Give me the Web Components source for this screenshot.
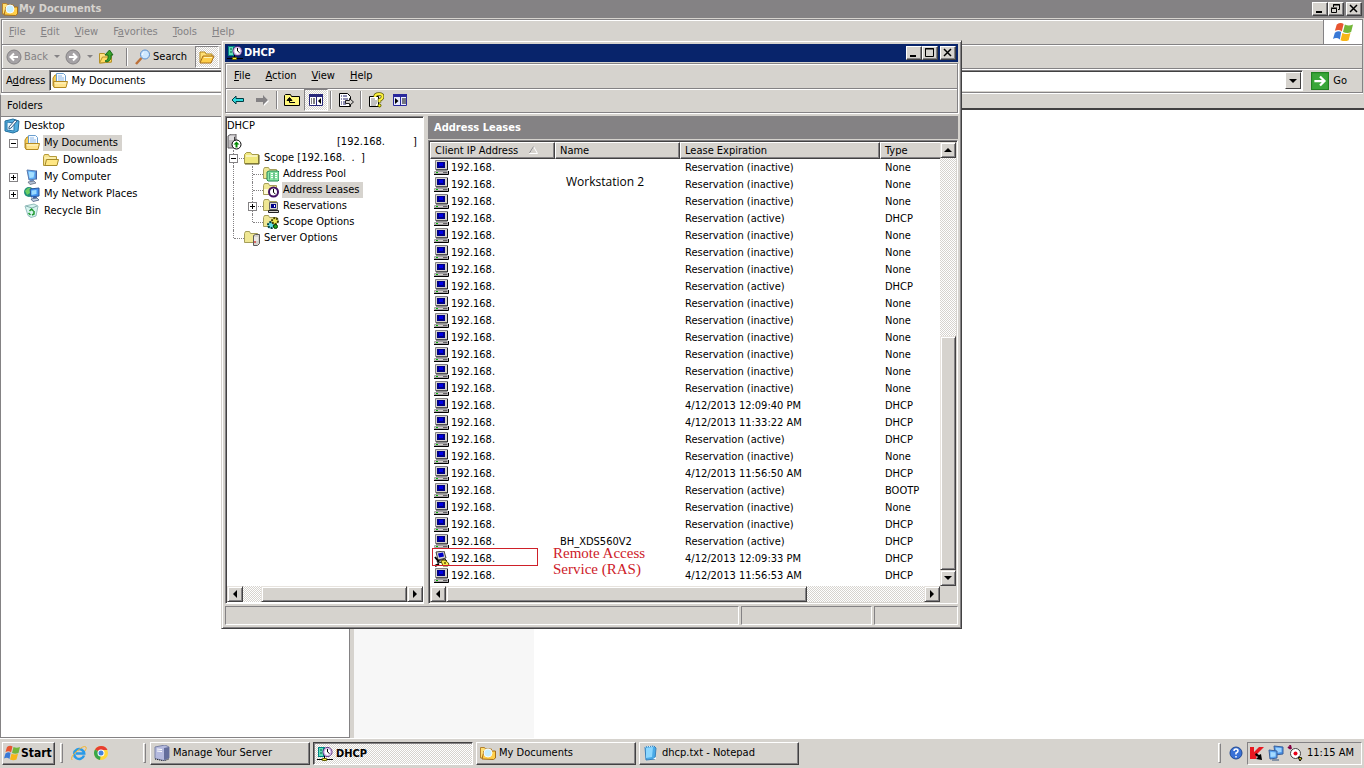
<!DOCTYPE html>
<html lang="en">
<head>
<meta charset="utf-8">
<title>DHCP</title>
<style>
html, body {
	height: 100%;
	margin: 0;
}

body {
	overflow: hidden;
	font: 11px/16px "DejaVu Sans Condensed", "DejaVu Sans", sans-serif;
	color: #000000;
	--face: #d6d3ce;
	--shade: #848284;
	--dark: #424142;
	--navy: #08246b;
	--dither: repeating-conic-gradient(#ffffff 0 25%, #d6d3ce 0 50%) 0 0 / 2px 2px;
}
</style>
</head>
<body>
<desktop-page></desktop-page>

<script>
const base = `
* { box-sizing: border-box; }
button, input, select { font: inherit; color: inherit; margin: 0; }
button { border: 0; padding: 0; background: none; white-space: nowrap; }
`;

// every element below clones its own template into an open shadow root
function define(name, html, setup) {
	const template = document.createElement("template");
	template.innerHTML = html.replace("<style>", "<style>" + base);
	customElements.define(name, class extends HTMLElement {
		static observedAttributes = ["name"];

		constructor() {
			super();
			this.attachShadow({ mode: "open" });
			this.shadowRoot.appendChild(template.content.cloneNode(true));
		}

		connectedCallback() {
			if (setup) setup(this, this.shadowRoot);
		}

		attributeChangedCallback() {
			if (this.isConnected && setup) setup(this, this.shadowRoot);
		}
	});
}

const folder = `<path d="M.5 4.500l1-2h4l1 2h7v9H.5z" fill="#f7e38c" stroke="#b59a39"/><path d="M1.500 6h11" stroke="#fff7c6"/><path d="M2 13.500l1.500-6h12l-1.500 6z" fill="#ffe784" stroke="#a58a29"/>`;
const smallFolder = `<path d="M.5 3.500l1-2h4l1 2h7v9H.5z" fill="#efe794" stroke="#a59e5a"/>`;
const docs = `<path d="M1 5l2-3h3v12H2l-1-1z" fill="#f7cf5a" stroke="#b58a21"/><path d="M4.500.5h7l2 2v9h-9z" fill="#f7fbff" stroke="#6b9ece"/><path d="M6 3h4M6 5h6M6 7h6" stroke="#8cb6e7"/><path d="M1.500 8.500h14l-1.500 6H2z" fill="#ffe38c" stroke="#b58a21"/><path d="M3 10h11" stroke="#fff7ce"/>`;
const searchFolder = `<path d="M.5 2.500h4l1 1.500h6v9H.5z" fill="#ffdf73" stroke="#b5822e"/><path d="M2 14l2-8h11.500v7l-2 1.500z" fill="#ffcf4a" stroke="#a56d18"/><circle cx="8" cy="8" r="4" fill="#c6efff" stroke="#f7fbff"/>`;
const clockServer = `<path d="M1 1h7v10H1z" fill="#008284"/><path d="M2 2h4v8H2z" fill="#63dfb5"/><path d="M3 4h2M3 7h2" stroke="#006142"/><circle cx="10.500" cy="6" r="4.500" fill="#fff" stroke="#4a1873"/><circle cx="10.500" cy="6" r="3.500" fill="none" stroke="#ceb2e7"/><path d="M10.500 3v3l2 1.500" fill="none" stroke="#000"/><path d="M0 13.500h16M7.500 10v3" stroke="#000"/><path d="M5.500 12.500h4v2h-4z" fill="#ffef42" stroke="#636100"/>`;
const flag = `<path d="M3 2q3-2 5.500-.5L7 7.500Q5 5.500 1.500 7z" fill="#e75531"/><path d="M9.500 2q3 1.500 6.500 0L14.500 8q-3 1.500-6.500 0z" fill="#73b639"/><path d="M1.500 8.500q3-2 5-.5L5.500 14Q3 12 0 13.500z" fill="#3979d6"/><path d="M7.500 8.800q3 1.500 6.500 0L12.500 14.500q-3 1.500-6.500 0z" fill="#f7b618"/>`;

const icons = {
	folder: folder,
	yellow: `<path d="M.5 4.500l2-2h4l1.500 2h6.500v9H.5z" fill="#efe77b" stroke="#a59a4a"/><path d="M2 6h11" stroke="#fff"/><path d="M15 5v9H1" fill="none" stroke="#5a5921"/>`,
	open: `<path d="M1 13V3h5l1 2h6v3" fill="#ffdf73" stroke="#b58a21"/><path d="M1 14l3-7h11l-3 7z" fill="#ffcf4a" stroke="#a56d18"/><path d="M5 8.500h8" stroke="#fff3b5"/>`,
	docs: docs,
	searchfolder: searchFolder,
	desktop: `<path d="M1 3l8-2 6 2-1 10-5 2-8-2z" fill="#52aede" stroke="#216d9c"/><path d="M3 4l7 1v8l-7-1z" fill="#e7f7ff" stroke="#2979ad"/><path d="M5 9l6-7 2 1-6 7-2 1z" fill="#fff" stroke="#315d84"/>`,
	computer: `<path d="M3 1l9 1v8l-7 1z" fill="#5aaaf7" stroke="#5a7aad"/><path d="M4.500 2.500l6 1-1 5-4 .5z" fill="#a5dfff"/><path d="M6 11h4v2H6z" fill="#638ac6"/><path d="M4 13l6-1 2 2-6 1.500z" fill="#b5c3d6" stroke="#7b8294"/><path d="M12 1l1 1v8l-1 1z" fill="#4261a5"/>`,
	network: `<circle cx="5" cy="6" r="5" fill="#218e7b"/><path d="M1 5q3-4 6-3l-1 5-3 2z" fill="#6bcf63"/><path d="M6 3l9-1v8l-8 1z" fill="#4292ef" stroke="#29559c"/><path d="M7.500 4.500l5-.5v4l-5 1z" fill="#9cdbff"/><path d="M9 11h4v2H9z" fill="#3961ad"/><path d="M7 13l6-1 2 2-6 1.500z" fill="#c6d7e7" stroke="#637594"/>`,
	recycle: `<path d="M1 3l9-2 4 2-2 10-5 1.500-3-2z" fill="#d6f3ef" stroke="#94bebd"/><path d="M2 3l6 2 5-2" fill="none" stroke="#84aead"/><path d="M5.500 8l2-2 2 2M10 8v3l-2 1M6.500 12l-2-2" fill="none" stroke="#219a31" stroke-width="1.500"/>`,
	back: `<circle cx="8" cy="8" r="7" fill="#a5a2a5" stroke="#848284"/><path d="M12 8H5M8 4.500L4.500 8 8 11.500" fill="none" stroke="#fff" stroke-width="2"/>`,
	forward: `<circle cx="8" cy="8" r="7" fill="#a5a2a5" stroke="#848284"/><path d="M4 8h7M8 4.500l3.500 3.500L8 11.500" fill="none" stroke="#fff" stroke-width="2"/>`,
	up: `<path d="M1.500 14V4.500h5l1 1.500h6v7z" fill="#ffe384" stroke="#b59229"/><path d="M1.500 14l3-6h9v5z" fill="#ffdb63" stroke="#b59229"/><path d="M7 12q4-1 3-6H7l4.500-5L15 6h-2q1 5-4 7z" fill="#39a629" stroke="#18691d"/>`,
	search: `<circle cx="10" cy="5.500" r="4.500" fill="#cee7ff" stroke="#5a8ece"/><path d="M8.500 3.500q-1 1-1 2.500" stroke="#fff" fill="none"/><path d="M6.500 9l-5.500 6" stroke="#bd7139" stroke-width="2.500"/>`,
	go: `<path d="M0 0h16v16H0z" fill="#39a639"/><path d="M.5.5h15v15H.5z" fill="none" stroke="#218221"/><path d="M3 8h9M8 4l4 4-4 4" fill="none" stroke="#fff" stroke-width="2"/>`,
	flag: flag,
	dhcp: clockServer,
	left: `<path d="M2 8l4-4v2.500h7.500v3H6V12z" fill="#31dbde" stroke="#003c42"/>`,
	right: `<path d="M15 9l-5-5v3H3v3h7v4z" fill="#fff"/><path d="M14 8L9 3v3H2v4h7v3z" fill="#848284"/>`,
	levelup: `<path d="M.5 13.500v-10l1-1h5l1 2h8v9z" fill="#fff77b" stroke="#000"/><path d="M5.500 7.500v3H11M3 8.500l2.500-3 2.500 3z" stroke="#000" fill="none"/><path d="M3 8.500l2.500-3 2.500 3z"/>`,
	panel: `<path d="M1.500 2.500h13v11h-13z" fill="#fff" stroke="#29287b"/><path d="M1 2h14v3H1z" fill="#29287b"/><path d="M8.500 4v10" stroke="#29287b"/><path d="M3 7h1M5 7h2M3 9h1M5 9h2M3 11h1M5 11h2" stroke="#000"/><path d="M13 6v6l-3-3z"/>`,
	panelright: `<path d="M1.500 2.500h13v11h-13z" fill="#e7ebff" stroke="#29289c"/><path d="M1 2h14v3H1z" fill="#29289c"/><path d="M8.500 4v10" stroke="#29289c"/><path d="M10 7h4M10 9h4M10 11h4" stroke="#000"/><path d="M3 6v6l3.500-3z"/>`,
	export: `<path d="M1.500 1.500h8l3 3v10h-11z" fill="#fff" stroke="#000"/><path d="M3 4h1M5 4h4M3 7h1M5 7h5M3 10h1M5 10h3M3 12h1M5 12h3" stroke="#21206b"/><path d="M7.500 8.500h4v-2l4 3.500-4 3.500v-2h-4z" fill="#d6d3ce" stroke="#212021"/>`,
	help: `<path d="M1.500 4.500h9v10h-9z" fill="#fff" stroke="#000"/><path d="M3 7h4M3 9h6M3 11h6M3 13h5" stroke="#848284"/><path d="M7 5q0-3 4-3t3.500 3q0 2-3 3v2.500" fill="none" stroke="#5a5900" stroke-width="3.500"/><path d="M7 5q0-3 4-3t3.500 3q0 2-3 3v2" fill="none" stroke="#fff342" stroke-width="2"/><circle cx="11.500" cy="13.500" r="1.500" fill="#ffff00" stroke="#5a5900"/>`,
	server: `<path d="M1 2l3-2h5v12l-2 2H1z" fill="#bdbabd" stroke="#636163"/><path d="M2 3h5M2 5h5" stroke="#fff"/><path d="M7.500 3v9" stroke="#424142"/><circle cx="9.500" cy="10.500" r="4.500" fill="#fff" stroke="#000"/><path d="M6.500 10.500l3-3 3 3h-2v3h-2v-3z" fill="#008a00"/>`,
	pool: smallFolder + `<path d="M4 6l2-1h9l1 1v8l-1 1H5l-1-1z" fill="#8ce7a5" stroke="#218252"/><path d="M8 7.500h2M8 9.500h2M8 11.500h2M12 7.500h2M12 9.500h2M12 11.500h2" stroke="#fff"/><path d="M6.500 6.500v7M11 6.500v7" stroke="#52a67b"/>`,
	leases: smallFolder + `<path d="M1 7h10l-2 5H1z" fill="#fffbd6"/><circle cx="10.500" cy="10" r="4.500" fill="#fff" stroke="#421063" stroke-width="2"/><path d="M10.500 7v3.500l2 1.500" fill="none" stroke="#000"/>`,
	reservations: smallFolder + `<path d="M6.500 4.500h8v7h-8z" fill="#d6d3ce" stroke="#636163"/><path d="M8 6h5v4H8z" fill="#00008c"/><path d="M11 7h1v2h-1z" fill="#fff"/><path d="M5.500 12.500h10v2h-10z" fill="#d6d3ce" stroke="#212021"/>`,
	options: smallFolder + `<circle cx="8" cy="11" r="3" fill="#63dfe7" stroke="#004142" stroke-width="2" stroke-dasharray="2 1"/><circle cx="12" cy="7" r="3" fill="#efe752" stroke="#424100" stroke-width="2" stroke-dasharray="2 1"/><circle cx="12.500" cy="12.500" r="2" fill="#21a221" stroke="#003c00"/>`,
	serveroptions: smallFolder + `<path d="M9.500 5.500l2-1h4v9l-2 2h-4z" fill="#d6d3ce" stroke="#5a595a"/><path d="M10 8h4M10 10h4" stroke="#fff"/><path d="M10 12h2" stroke="#d60000"/>`,
	client: `<path d="M1.500.5h12v9h-12z" fill="#d6d3ce" stroke="#848284"/><path d="M3 2h8v6H3z" fill="#000084"/><path d="M5 3h4v3H5z" fill="#0000e7"/><path d="M13.500 1v9H2" fill="none" stroke="#212021"/><path d="M.5 11.500h13v2H.5z" fill="#d6d3ce" stroke="#a5a2a5"/><path d="M0 14.500h14.500V11" fill="none" stroke="#000"/><path d="M2 12.500h2" stroke="#00b200"/><path d="M9 12.500h4" stroke="#636163"/>`,
	ras: `<path d="M2 1l8-1 2 7-8 2z" fill="#d6d3ce" stroke="#424142"/><path d="M4 2.500l5-1 1 4-5 1z" fill="#0000c6"/><path d="M3 10l8-2 2 2-9 2z" fill="#d6d3ce" stroke="#212021"/><path d="M1 6l4 5M1 15l4-2" stroke="#000" stroke-width="2"/><path d="M7 10q4-3 8 3l-1 2H9z" fill="#f7e74a" stroke="#5a5500"/><circle cx="11" cy="12" r="1" fill="#5a5500"/>`,
	ie: `<path d="M13 10.500A5 5 0 1 1 13.200 8.500H5" fill="none" stroke="#299ae7" stroke-width="2.500"/><path d="M1 15Q-1 12 6 6t9-4q1 1-1 4" fill="none" stroke="#f7b631"/>`,
	chrome: `<circle cx="8" cy="8" r="7" fill="#ffd73a"/><path d="M8 8L2 4.500A7 7 0 0 1 14.500 5H8z" fill="#e73d31"/><path d="M8 8L2 4.500A7 7 0 0 0 7 15z" fill="#39a64a"/><circle cx="8" cy="8" r="3.500" fill="#fff"/><circle cx="8" cy="8" r="2.500" fill="#4282de"/>`,
	tower: `<path d="M1 2l10-2 4 2v11l-5 2.500-9-2z" fill="#b5bade" stroke="#7b82a5"/><path d="M10 3l5-1v11l-5 2z" fill="#636d9c"/><path d="M3 4l5 .5M3 6l5 .5" stroke="#fff"/><path d="M1 14l9 2 5-2" fill="none" stroke="#212429" stroke-dasharray="1 1"/>`,
	notepad: `<path d="M2 2l9-1 2 2-1 11-9 1z" fill="#4aaae7" stroke="#3982bd"/><path d="M3 3l7-1-1 10-6 1z" fill="#8cd7ff"/><path d="M2 2l9-1" stroke="#e7f7ff" stroke-dasharray="1 1"/><path d="M10 14l3-2v2z" fill="#fff"/>`,
	ask: `<circle cx="8" cy="8" r="6" fill="#3971d6" stroke="#214992"/><path d="M6 6q0-2 2-2t2 2q0 1-2 2v1.500M8 11v1.500" fill="none" stroke="#fff" stroke-width="1.500"/>`,
	kaspersky: `<path d="M1 2h4v5l5-5h5L8.500 8.500 7 14H1z" fill="#e71821"/><path d="M7 8l3 2 2-1 1 6-6-1 2-2-3-2z" fill="#000"/>`,
	lan: `<path d="M6 1l9 1v7l-8 1z" fill="#4a92e7" stroke="#39619c"/><path d="M7.500 2.500l6 .5v4l-5 1z" fill="#9cd3ff"/><path d="M1 5l8 1v7l-7 1z" fill="#5aa2ef" stroke="#39619c"/><path d="M2.500 7l5 .5v4l-5 .5z" fill="#a5dbff"/><path d="M4 15h7" stroke="#8492a5" stroke-width="2"/>`,
	target: `<circle cx="8.500" cy="8.500" r="5" fill="#fff" stroke="#424142"/><circle cx="8.500" cy="8.500" r="2" fill="#e70018"/><path d="M1 2l3 2M3 0l1 4" stroke="#840042" stroke-width="2"/><path d="M11 12l4 1-2 3z" fill="#efdb00" stroke="#000"/>`
};

define("win-icon", `
<style>
:host { display: inline-block; flex: none; width: 16px; height: 16px; }
svg { display: block; width: 100%; height: 100%; }
</style>
<svg viewBox="0 0 16 16" aria-hidden="true"></svg>
`, (host, root) => {
	root.querySelector("svg").innerHTML = icons[host.getAttribute("name")] || "";
});

define("title-bar", `
<style>
:host { display: flex; align-items: center; height: 18px; padding: 0 2px; color: #d6d3ce; background: var(--shade); font-weight: bold; }
:host([active]) { color: #ffffff; background: var(--navy); }
.text { flex: 1; padding-left: 1px; }
button { width: 16px; height: 14px; background: var(--face); border: 1px solid; border-color: #fff var(--dark) var(--dark) #fff; box-shadow: inset -1px -1px var(--shade); }
.close { margin-left: 2px; }
svg { display: block; width: 14px; height: 12px; fill: none; stroke: #000; }
</style>
<slot name="icon"></slot>
<span class="text"><slot></slot></span>
<button aria-label="Minimize"><svg viewBox="0 0 14 12"><path d="M3 9h6" stroke-width="2"/></svg></button>
<button aria-label="Maximize"><svg viewBox="0 0 14 12" class="size"></svg></button>
<button class="close" aria-label="Close"><svg viewBox="0 0 14 12"><path d="M3 2l7 7M10 2L3 9" stroke-width="1.500"/></svg></button>
`, (host, root) => {
	root.querySelector(".size").innerHTML = host.hasAttribute("maximized")
		? `<path d="M4.500 4V1.500h6v5H9M4 2h7M2.500 5.500h5v4h-5zM2 5h6"/>`
		: `<path d="M2.500 1.500h8v8h-8zM2 2h9"/>`;
});

define("menu-bar", `
<style>
:host { display: flex; align-items: center; }
</style>
<slot></slot>
`);

define("menu-item", `
<style>
:host { display: block; }
button { padding: 0 8px 0 7px; }
</style>
<button><slot></slot></button>
`);

define("tool-button", `
<style>
:host { display: flex; flex: none; }
button { display: flex; align-items: center; height: 22px; padding: 0 3px; gap: 2px; border: 1px solid transparent; }
:host([pressed]) button { border-color: var(--shade) #fff #fff var(--shade); background: var(--dither); }
:host([disabled]) button { color: var(--shade); }
.arrow { display: none; margin-left: 4px; border: 3px solid transparent; border-top-color: var(--shade); border-bottom: 0; }
:host([menu]) .arrow { display: block; }
:host([menu]) button { padding-right: 0; }
</style>
<button><win-icon></win-icon><slot></slot><span class="arrow"></span></button>
`, (host, root) => {
	root.querySelector("win-icon").setAttribute("name", host.getAttribute("icon"));
	if (host.hasAttribute("label")) root.querySelector("button").setAttribute("aria-label", host.getAttribute("label"));
});

define("tool-line", `
<style>
:host { display: block; flex: none; width: 2px; height: 18px; border-left: 1px solid var(--shade); border-right: 1px solid #fff; }
</style>
`);

define("tree-item", `
<style>
:host { display: flex; align-items: center; height: var(--row, 16px); white-space: nowrap; }
.cell { position: relative; flex: none; align-self: stretch; width: 19px; }
.cell:first-of-type { width: var(--first, 17px); }
.line::before { content: ""; position: absolute; top: 0; bottom: 0; right: 10px; border-left: 1px dotted var(--shade); }
.last::before { bottom: 50%; }
.branch::after { content: ""; position: absolute; top: 50%; right: 0; width: 10px; border-top: 1px dotted var(--shade); }
button { position: absolute; z-index: 1; right: 6px; top: calc(50% - 4px); width: 9px; height: 9px; border: 1px solid var(--shade); background: #fff; }
button::before { content: ""; position: absolute; left: 1px; right: 1px; top: 3px; height: 1px; background: #000; }
button.plus::after { content: ""; position: absolute; top: 1px; bottom: 1px; left: 3px; width: 1px; background: #000; }
.text { margin-left: 3px; padding: 0 4px 0 1px; white-space: pre; }
:host([noicon]) .text { margin-left: 0; padding-left: 0; }
:host([selected]) .text { background: var(--face); }
</style>
<win-icon></win-icon><span class="text"><slot></slot></span>
`, (host, root) => {
	const icon = root.querySelector("win-icon");
	if (host.hasAttribute("noicon")) icon.remove();
	else icon.setAttribute("name", host.getAttribute("icon"));
	// one letter per indent cell: s space, l line, b branch, e last branch
	for (const kind of host.getAttribute("guides") || "") {
		const cell = document.createElement("span");
		cell.className = "cell" + { s: "", l: " line", b: " line branch", e: " line last branch" }[kind];
		icon.before(cell);
	}
	const expand = host.getAttribute("expand");
	if (expand) {
		const button = document.createElement("button");
		button.className = expand;
		button.setAttribute("aria-label", expand == "plus" ? "Expand" : "Collapse");
		icon.previousElementSibling.append(button);
	}
});

define("scroll-bar", `
<style>
:host { display: flex; flex: none; height: 16px; background: var(--dither); }
:host([vertical]) { flex-direction: column; width: 16px; height: auto; }
button, .thumb { border: 1px solid; border-color: #e7e3de var(--dark) var(--dark) #e7e3de; box-shadow: inset 1px 1px #fff, inset -1px -1px var(--shade); background: var(--face); }
button { display: grid; place-items: center; flex: none; width: 16px; height: 16px; }
.before { flex: var(--before, 0) 0 0px; }
.thumb { flex: var(--thumb, 1) 0 0px; }
.after { flex: var(--after, 0) 0 0px; }
svg { width: 8px; height: 8px; }
:host([vertical]) svg { rotate: 90deg; }
</style>
<button aria-label="Scroll back"><svg viewBox="0 0 8 8"><path d="M6 0v8L2 4z"/></svg></button>
<div class="before"></div><div class="thumb"></div><div class="after"></div>
<button aria-label="Scroll forward"><svg viewBox="0 0 8 8"><path d="M2 0v8l4-4z"/></svg></button>
`);

define("lease-table", `
<style>
:host { display: block; position: relative; flex: 1; min-width: 0; background: #fff; }
table { width: 100%; border-collapse: separate; border-spacing: 0; table-layout: fixed; }
th { height: 17px; padding: 0 0 0 4px; text-align: left; font-weight: normal; line-height: 14px; background: var(--face); border: 1px solid; border-color: #fff var(--dark) var(--dark) #fff; box-shadow: inset -1px -1px var(--shade); }
th:last-child { border-right: 0; box-shadow: inset 0 -1px var(--shade); }
th:nth-child(1), th:nth-child(2) { width: 125px; }
th:nth-child(3) { width: 200px; }
th svg { width: 9px; height: 8px; margin-left: 11px; }
td { height: 17px; padding: 0 0 0 5px; line-height: 17px; white-space: nowrap; }
td:first-child { padding-left: 4px; }
td div { display: flex; align-items: center; gap: 1px; height: 17px; }
.foot { height: 2px; }
.note { position: absolute; white-space: nowrap; }
.station { left: 136px; top: 32px; font: 12px/16px "Open Sans", sans-serif; }
.frame { left: 2px; top: 406px; width: 106px; height: 18px; border: 1px solid #ce2029; }
.remote { left: 123px; top: 403px; color: #ce2029; font: 15px/16px "Liberation Serif", serif; }
</style>
<table>
<thead><tr><th>Client IP Address<svg viewBox="0 0 9 8" aria-hidden="true"><path d="M.5 7.500L4.500.5l4 7z" fill="none" stroke="#fff"/><path d="M.5 7L4.500.5" stroke="#848284"/></svg></th><th>Name</th><th>Lease Expiration</th><th>Type</th></tr></thead>
<tbody></tbody>
</table>
<div class="foot"></div>
<span class="note station">Workstation 2</span>
<span class="note frame"></span>
<span class="note remote">Remote Access<br>Service (RAS)</span>
`, (host, root) => {
	const off = "Reservation (inactive)";
	const on = "Reservation (active)";
	const leases = [
		[off, "None"], [off, "None"], [off, "None"], [on, "DHCP"], [off, "None"],
		[off, "None"], [off, "None"], [on, "DHCP"], [off, "None"], [off, "None"],
		[off, "None"], [off, "None"], [off, "None"], [off, "None"],
		["4/12/2013 12:09:40 PM", "DHCP"], ["4/12/2013 11:33:22 AM", "DHCP"],
		[on, "DHCP"], [off, "None"], ["4/12/2013 11:56:50 AM", "DHCP"],
		[on, "BOOTP"], [off, "None"], [off, "DHCP"], [on, "DHCP", "BH_XDS560V2"],
		["4/12/2013 12:09:33 PM", "DHCP", "", "ras"], ["4/12/2013 11:56:53 AM", "DHCP"]
	];
	root.querySelector("tbody").innerHTML = leases.map(([lease, type, name, icon]) => `
		<tr><td><div><win-icon name="${icon || "client"}"></win-icon>192.168.</div></td><td>${name || ""}</td><td>${lease}</td><td>${type}</td></tr>`).join("");
});

define("dhcp-window", `
<style>
:host { display: block; background: var(--face); border: 1px solid; border-color: var(--face) var(--dark) var(--dark) var(--face); box-shadow: inset 1px 1px #fff, inset -1px -1px var(--shade); padding: 3px; }
.bars { margin-top: 1px; border: 1px solid var(--shade); box-shadow: 1px 1px #fff, inset 1px 1px #fff; }
menu-bar { height: 24px; padding-left: 1px; }
.tools { display: flex; align-items: center; height: 24px; padding-bottom: 1px; border-top: 1px solid var(--shade); box-shadow: inset 0 1px #fff; }
tool-line { margin: 0 2px; }
.panes { display: flex; gap: 4px; margin-top: 3px; }
.tree { display: flex; flex-direction: column; width: 199px; background: #fff; border: 1px solid; border-color: var(--shade) #fff #fff var(--shade); box-shadow: inset 1px 1px var(--dark); padding: 1px 0 1px 1px; }
.items { flex: 1; }
.gap { display: inline-block; width: 90px; }
.hidden { display: inline-block; width: 28px; }
.tree scroll-bar { --before: 18; --thumb: 146; }
.list { flex: 1; min-width: 0; }
h2 { margin: 0 0 1px; padding: 0 6px; font-size: 11px; line-height: 23px; color: #fff; background: var(--shade); }
.view { border: 1px solid; border-color: var(--shade) #fff #fff var(--shade); box-shadow: inset 1px 1px var(--dark); padding: 1px; }
.top, .bottom { display: flex; }
.top scroll-bar { --before: 180; --thumb: 235; }
.bottom { background: var(--face); }
.bottom scroll-bar { flex: 1; --thumb: 361; --after: 117; }
.corner { width: 16px; }
.status { display: flex; gap: 2px; margin-top: 2px; }
.status div { height: 19px; border: 1px solid; border-color: var(--shade) #fff #fff var(--shade); }
.status div:nth-child(1) { flex: 1; }
.status div:nth-child(2) { width: 131px; }
.status div:nth-child(3) { width: 84px; }
</style>
<title-bar active><win-icon slot="icon" name="dhcp"></win-icon>DHCP</title-bar>
<div class="bars">
	<menu-bar><menu-item><u>F</u>ile</menu-item><menu-item><u>A</u>ction</menu-item><menu-item><u>V</u>iew</menu-item><menu-item><u>H</u>elp</menu-item></menu-bar>
	<div class="tools">
		<tool-button icon="left" label="Back"></tool-button><tool-button icon="right" label="Forward"></tool-button>
		<tool-line></tool-line>
		<tool-button icon="levelup" label="Up one level"></tool-button><tool-button icon="panel" label="Show tree" pressed></tool-button>
		<tool-line></tool-line>
		<tool-button icon="export" label="Export list"></tool-button>
		<tool-line></tool-line>
		<tool-button icon="help" label="Help"></tool-button><tool-button icon="panelright" label="Action pane"></tool-button>
	</div>
</div>
<div class="panes">
	<div class="tree">
		<div class="items">
			<tree-item noicon>DHCP</tree-item>
			<tree-item icon="server"><span class="gap"></span>[192.168.<span class="hidden"></span>]</tree-item>
			<tree-item icon="yellow" guides="b" expand="minus">Scope [192.168.  .  ]</tree-item>
			<tree-item icon="pool" guides="lb">Address Pool</tree-item>
			<tree-item icon="leases" guides="lb" selected>Address Leases</tree-item>
			<tree-item icon="reservations" guides="lb" expand="plus">Reservations</tree-item>
			<tree-item icon="options" guides="le">Scope Options</tree-item>
			<tree-item icon="serveroptions" guides="e">Server Options</tree-item>
		</div>
		<scroll-bar></scroll-bar>
	</div>
	<div class="list">
		<h2>Address Leases</h2>
		<div class="view">
			<div class="top"><lease-table></lease-table><scroll-bar vertical></scroll-bar></div>
			<div class="bottom"><scroll-bar></scroll-bar><div class="corner"></div></div>
		</div>
	</div>
</div>
<div class="status"><div></div><div></div><div></div></div>
`);

define("explorer-window", `
<style>
:host { display: flex; flex-direction: column; background: var(--face); }
.bars { margin: 1px 1px 0; border: 1px solid var(--shade); box-shadow: inset 1px 1px #fff, 0 1px #fff; }
.row { display: flex; align-items: center; height: 24px; }
.row + .row { border-top: 1px solid var(--shade); box-shadow: inset 0 1px #fff; }
menu-bar { flex: 1; color: var(--shade); }
.brand { display: grid; place-items: center; align-self: stretch; width: 39px; background: #fff; border-left: 1px solid var(--shade); }
.brand win-icon { width: 20px; height: 20px; }
tool-line { margin: 0 3px 0 8px; }
.side { margin-left: 4px; }
label { padding: 0 4px; }
.combo { display: flex; flex: 1; align-items: center; height: 21px; padding: 1px 1px 1px 2px; background: #fff; border: 1px solid; border-color: var(--shade) #fff #fff var(--shade); box-shadow: inset 1px 1px var(--dark); }
input { flex: 1; border: 0; padding: 0 3px; background: none; outline: none; }
.drop { display: grid; place-items: center; width: 16px; height: 17px; background: var(--face); border: 1px solid; border-color: #fff var(--dark) var(--dark) #fff; }
.drop svg { width: 8px; height: 4px; }
.go { display: flex; align-items: center; gap: 4px; padding: 0 15px 0 8px; }
.go win-icon { width: 18px; height: 18px; }
.panes { display: flex; flex: 1; gap: 4px; margin-top: 1px; min-height: 0; }
.folders { display: flex; flex-direction: column; width: 350px; border: 1px solid; border-color: #fff var(--shade) var(--shade) var(--shade); }
h2 { margin: 0; padding: 0 6px; font-size: 11px; font-weight: normal; line-height: 21px; border-bottom: 1px solid var(--shade); }
.items { flex: 1; background: #fff; padding: 0 0 0 3px; --row: 17px; --first: 20px; }
.files { flex: 1; display: flex; margin-top: 14px; background: #fff; border-top: 2px solid var(--dark); }
.info { width: 180px; background: #f7f7f7; }
</style>
<title-bar maximized><win-icon slot="icon" name="searchfolder"></win-icon>My Documents</title-bar>
<div class="bars">
	<div class="row">
		<menu-bar><menu-item><u>F</u>ile</menu-item><menu-item><u>E</u>dit</menu-item><menu-item><u>V</u>iew</menu-item><menu-item>F<u>a</u>vorites</menu-item><menu-item><u>T</u>ools</menu-item><menu-item><u>H</u>elp</menu-item></menu-bar>
		<div class="brand"><win-icon name="flag"></win-icon></div>
	</div>
	<div class="row">
		<tool-button icon="back" disabled menu>Back</tool-button>
		<tool-button icon="forward" label="Forward" menu></tool-button>
		<tool-button icon="up" label="Up"></tool-button>
		<tool-line></tool-line>
		<tool-button icon="search">Search</tool-button>
		<tool-button class="side" icon="open" label="Folders" pressed></tool-button>
	</div>
	<div class="row">
		<label for="address">A<u>d</u>dress</label>
		<div class="combo">
			<win-icon name="docs"></win-icon>
			<input id="address" value="My Documents">
			<button class="drop" aria-label="Show addresses"><svg viewBox="0 0 8 4"><path d="M0 0h8L4 4z"/></svg></button>
		</div>
		<button class="go"><win-icon name="go"></win-icon>Go</button>
	</div>
</div>
<div class="panes">
	<div class="folders">
		<h2>Folders</h2>
		<div class="items">
			<tree-item icon="desktop">Desktop</tree-item>
			<tree-item icon="docs" guides="s" expand="minus" selected>My Documents</tree-item>
			<tree-item icon="folder" guides="ss">Downloads</tree-item>
			<tree-item icon="computer" guides="s" expand="plus">My Computer</tree-item>
			<tree-item icon="network" guides="s" expand="plus">My Network Places</tree-item>
			<tree-item icon="recycle" guides="s">Recycle Bin</tree-item>
		</div>
	</div>
	<div class="files"><div class="info"></div></div>
</div>
`);

define("task-button", `
<style>
:host { display: block; width: 160px; }
button { display: flex; align-items: center; gap: 3px; width: 100%; height: 23px; padding: 0 3px; background: var(--face); border: 1px solid; border-color: #fff var(--dark) var(--dark) #fff; box-shadow: inset -1px -1px var(--shade); }
:host([active]) button { font-weight: bold; background: var(--dither); border-color: var(--dark) #fff #fff var(--dark); box-shadow: inset 1px 1px var(--shade); padding-top: 2px; }
:host([start]) { width: 53px; }
:host([start]) button { font-size: 12px; font-weight: bold; gap: 1px; padding: 0 1px; }
</style>
<button><win-icon></win-icon><slot></slot></button>
`, (host, root) => {
	root.querySelector("win-icon").setAttribute("name", host.getAttribute("icon"));
});

define("task-bar", `
<style>
:host { display: flex; align-items: center; gap: 3px; height: 30px; padding: 0 2px 1px; background: var(--face); border-top: 1px solid #fff; }
.line { width: 3px; height: 20px; border: 1px solid; border-color: #fff var(--shade) var(--shade) #fff; }
.quick { display: flex; gap: 6px; width: 74px; padding-left: 5px; }
.first { margin-left: 2px; }
.gap { margin-right: 1px; }
.tray { display: flex; align-items: center; gap: 3px; height: 23px; padding: 0 7px 0 1px; border: 1px solid; border-color: var(--shade) #fff #fff var(--shade); }
.end { margin-left: auto; }
time { margin-left: 1px; white-space: nowrap; }
.ask { margin-left: 4px; }
</style>
<task-button start icon="flag">Start</task-button>
<span class="line first"></span>
<div class="quick"><win-icon name="ie"></win-icon><win-icon name="chrome"></win-icon></div>
<span class="line gap"></span>
<task-button icon="tower">Manage Your Server</task-button>
<task-button icon="dhcp" active>DHCP</task-button>
<task-button icon="searchfolder">My Documents</task-button>
<task-button icon="notepad">dhcp.txt - Notepad</task-button>
<span class="line end"></span>
<win-icon class="ask" name="ask"></win-icon>
<div class="tray"><win-icon name="kaspersky"></win-icon><win-icon name="lan"></win-icon><win-icon name="target"></win-icon><time>11:15 AM</time></div>
`);

define("desktop-page", `
<style>
:host { display: flex; flex-direction: column; height: 100vh; position: relative; overflow: hidden; }
explorer-window { flex: 1; min-height: 0; }
dhcp-window { position: absolute; left: 221px; top: 40px; width: 741px; }
</style>
<explorer-window></explorer-window>
<dhcp-window></dhcp-window>
<task-bar></task-bar>
`);
</script>
</body>
</html>
